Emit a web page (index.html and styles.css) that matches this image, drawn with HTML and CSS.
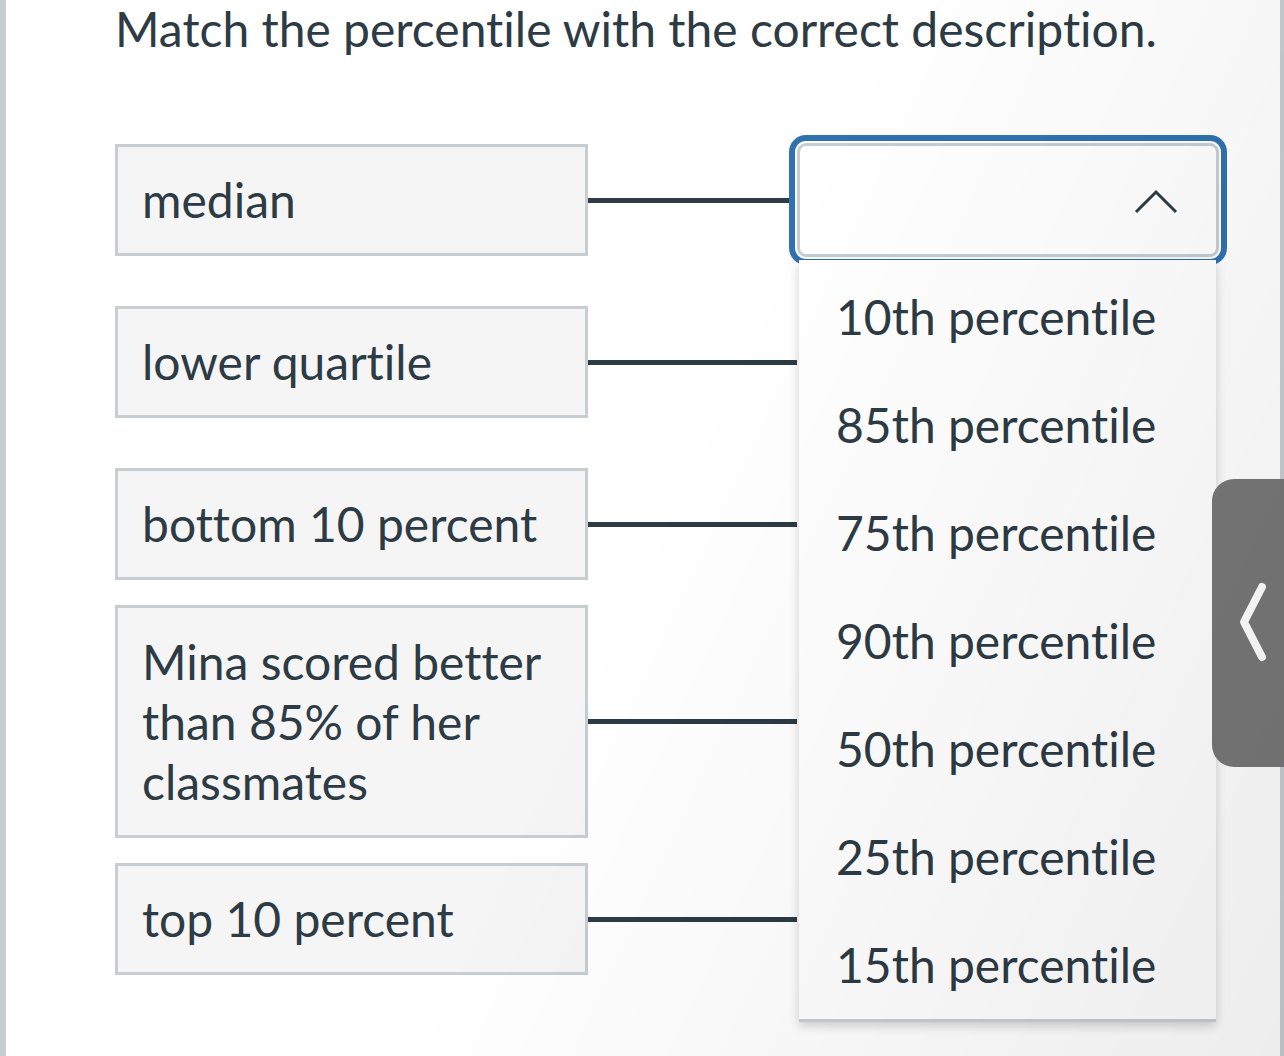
FILE: index.html
```html
<!DOCTYPE html>
<html lang="en">
<head>
    <meta charset="UTF-8">
    <meta name="viewport" content="width=device-width, initial-scale=1.0">
    <title>Matching question</title>
    <link rel="stylesheet" href="styles.css">
</head>
<body>
    <div class="page">
        <h1 class="ask">Match the percentile with the correct description.</h1>
        <div class="pairs">
            <div class="pair">
                <div class="term">median</div>
                <div class="wire"></div>
                <div class="pick open">
                    <svg class="caret" width="44" height="26" viewBox="0 0 44 26"><path d="M2 24 L22 4 L42 24" fill="none" stroke="#2d3b45" stroke-width="3"/></svg>
                    <ul class="opts">
                        <li>10th percentile</li>
                        <li>85th percentile</li>
                        <li>75th percentile</li>
                        <li>90th percentile</li>
                        <li>50th percentile</li>
                        <li>25th percentile</li>
                        <li>15th percentile</li>
                    </ul>
                </div>
            </div>
            <div class="pair">
                <div class="term">lower quartile</div>
                <div class="wire"></div>
                <div class="pick"></div>
            </div>
            <div class="pair">
                <div class="term">bottom 10 percent</div>
                <div class="wire"></div>
                <div class="pick"></div>
            </div>
            <div class="pair">
                <div class="term">Mina scored better than 85% of her classmates</div>
                <div class="wire"></div>
                <div class="pick"></div>
            </div>
            <div class="pair">
                <div class="term">top 10 percent</div>
                <div class="wire"></div>
                <div class="pick"></div>
            </div>
        </div>
    </div>
    <div class="tab">
        <svg width="40" height="90" viewBox="0 0 40 90"><path d="M30 8 L12 43 L30 78" fill="none" stroke="#fff" stroke-width="8" stroke-linecap="round" stroke-linejoin="round"/></svg>
    </div>
    <div class="glare"></div>
</body>
</html>
```

FILE: styles.css
```css
*{
    margin:0;
    padding:0;
    box-sizing:border-box;
}
body{
    font-family: Lato, "Noto Sans", sans-serif;
    font-variant-ligatures: none;
    color:#2d3b45;
    background:#fff;
    overflow:hidden;
}
.page{
    height:1056px;
    border-left:6px solid #c7cdd1;
    border-right:4px solid #c7cdd1;
    padding-left:109px;
}
.ask{
    font-size:48px;
    font-weight:400;
    line-height:58px;
    height:58px;
    margin-bottom:61px;
}
.pair{
    display:flex;
    align-items:center;
    min-height:162px;
}
.term{
    width:473px;
    border:3px solid #c7cdd1;
    background:#f5f5f5;
    padding:23px 23px 23px 24px;
    font-size:48px;
    line-height:60px;
}
.pair:nth-child(4) .term{
    padding-top:24px;
}
.wire{
    width:209px;
    height:5px;
    background:#2d3b45;
}
.pick{
    width:422px;
    height:114px;
    position:relative;
}
.pick.open{
    border:3px solid #c7cdd1;
    border-radius:9px;
    box-shadow:0 0 0 2px #fff, 0 0 0 8px #3072b0;
    background:#fff;
    z-index:2;
}
.caret{
    position:absolute;
    right:38px;
    top:42px;
}
.opts{
    list-style:none;
    position:absolute;
    left:-1px;
    top:114px;
    width:417px;
    padding-top:3px;
    background:#fff;
    border-bottom:3px solid #c7cdd1;
    box-shadow:0 4px 10px rgba(0,0,0,0.18);
}
.opts li{
    height:108px;
    line-height:108px;
    padding-left:37px;
    font-size:48px;
}
.tab{
    position:absolute;
    left:1212px;
    top:479px;
    width:80px;
    height:288px;
    background:#787878;
    border-radius:22px 0 0 22px;
    padding:100px 0 0 20px;
    z-index:3;
}
.glare{
    position:fixed;
    left:0;
    top:0;
    width:1284px;
    height:1056px;
    background:linear-gradient(115deg, rgba(0,0,0,0) 50%, rgba(0,0,0,0.07) 100%);
    pointer-events:none;
    z-index:4;
}
```
